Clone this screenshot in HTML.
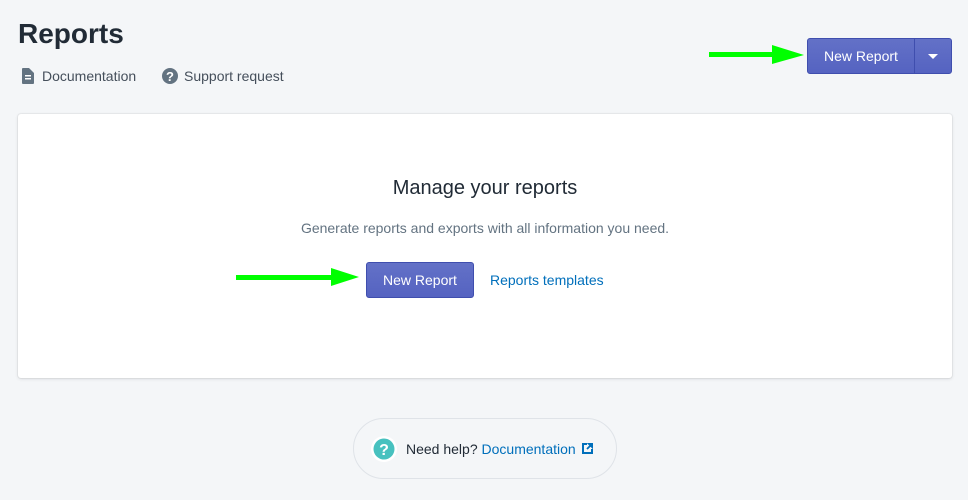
<!DOCTYPE html>
<html><head><style>
body{margin:0;width:968px;height:500px;background:#f4f6f8;font-family:"Liberation Sans",sans-serif;position:relative;overflow:hidden}
.a{position:absolute}
h1{position:absolute;left:18px;top:18px;margin:0;font-size:28px;font-weight:bold;color:#212b36}
.lnk{font-size:14px;color:#454f5b}
.btn{background:linear-gradient(#6371c7,#5563c1);border:1px solid #3f4eae;border-radius:3px;color:#fff;font-size:14px;box-sizing:border-box}
.card{left:18px;top:114px;width:934px;height:264px;background:#fff;border-radius:3px;box-shadow:0 0 0 1px rgba(63,63,68,.05),0 1px 3px rgba(63,63,68,.15)}
.blue{color:#006fbb}
</style></head><body>
<h1>Reports</h1>
<svg class="a" style="left:22px;top:68px" width="12" height="16" viewBox="0 0 12 16"><path d="M0 1a1 1 0 0 1 1-1h6l5 5v10a1 1 0 0 1-1 1H1a1 1 0 0 1-1-1z" fill="#637381"/><rect x="3" y="7" width="6" height="1.5" fill="#fff"/><rect x="3" y="10" width="6" height="1.5" fill="#fff"/></svg>
<div class="a lnk" style="left:42px;top:68px">Documentation</div>
<svg class="a" style="left:162px;top:68px" width="16" height="16" viewBox="0 0 16 16"><circle cx="8" cy="8" r="8" fill="#637381"/><text x="8" y="13" font-size="13" font-weight="bold" fill="#fff" text-anchor="middle" font-family="Liberation Sans">?</text></svg>
<div class="a lnk" style="left:184px;top:68px">Support request</div>
<svg class="a" style="left:708px;top:45px" width="96" height="22"><rect x="1" y="7" width="64" height="5" fill="#0f0"/><polygon points="64,0 96,10 64,19" fill="#0f0"/></svg>
<div class="a btn" style="left:807px;top:38px;width:145px;height:36px">
<div class="a" style="left:16px;top:9px">New Report</div>
<div class="a" style="left:106px;top:0;width:1px;height:34px;background:#3f4eae"></div>
<div class="a" style="left:120px;top:15px;width:0;height:0;border-left:5px solid transparent;border-right:5px solid transparent;border-top:5px solid #fff"></div>
</div>
<div class="a card"></div>
<div class="a" style="left:1px;width:968px;top:177px;text-align:center;font-size:20px;color:#212b36">Manage your reports</div>
<div class="a" style="left:1px;width:968px;top:220px;text-align:center;font-size:14px;color:#637381">Generate reports and exports with all information you need.</div>
<svg class="a" style="left:235px;top:268px" width="126" height="20"><rect x="1" y="7" width="96" height="5" fill="#0f0"/><polygon points="96,0 124,9 96,18" fill="#0f0"/></svg>
<div class="a btn" style="left:366px;top:262px;width:108px;height:36px"><div class="a" style="left:16px;top:9px">New Report</div></div>
<div class="a blue" style="left:490px;top:272px;font-size:14px">Reports templates</div>
<div class="a" style="left:353px;top:418px;width:264px;height:61px;border:1px solid #dfe3e8;border-radius:31px;box-sizing:border-box"></div>
<svg class="a" style="left:371px;top:436px" width="26" height="26"><circle cx="13" cy="13" r="13" fill="#fff"/><circle cx="13" cy="13" r="10.5" fill="#47c1bf"/><text x="13" y="19" font-size="16" font-weight="bold" fill="#fff" text-anchor="middle" font-family="Liberation Sans">?</text></svg>
<div class="a" style="left:406px;top:441px;font-size:14px;color:#212b36">Need help? <span class="blue">Documentation</span></div>
<svg class="a" style="left:582px;top:443px" width="11" height="11" viewBox="0 0 11 11"><path d="M5 1H1v9h9V6" stroke="#006fbb" stroke-width="2" fill="none"/><path d="M6 0h5v5z M10 1L5 6" stroke="#006fbb" stroke-width="1.8" fill="#006fbb"/></svg>
</body></html>
